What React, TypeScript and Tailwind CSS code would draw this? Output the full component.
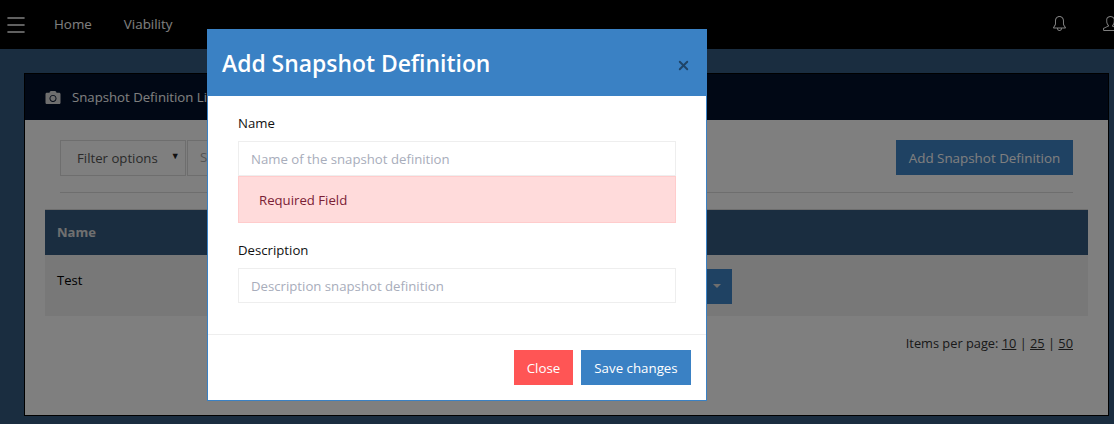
import { Menu, X } from 'lucide-react'
import { FaCamera } from 'react-icons/fa'
import { SlBell, SlUser } from 'react-icons/sl'

const font = { fontFamily: '"Open Sans", "Noto Sans", sans-serif' }

function Navbar() {
  return (
    <nav className="flex h-[49px] items-center bg-black text-[13.4px] text-white">
      <Menu className="ml-[4px] h-[24px] w-[24px]" strokeWidth={1.6} />
      <a className="ml-[26px]">Home</a>
      <a className="ml-[32px]">Viability</a>
      <div className="ml-auto flex items-center gap-[35px]">
        <SlBell className="mb-[3px] mr-[1px] h-[15px] w-[15px]" />
        <SlUser className="mb-[3px] mr-[-4px] h-[15px] w-[15px]" />
      </div>
    </nav>
  )
}

function DefinitionList() {
  return (
    <section className="ml-[24px] mr-[5px] mt-[24px] h-[343px] border border-black bg-white">
      <header className="flex h-[46px] items-center bg-[#02102a] pl-[20px] pt-[1px] text-[13.2px] text-white">
        <FaCamera className="mr-[11px] h-[15px] w-[16px] text-[#ddd]" />
        Snapshot Definition List
      </header>
      <div className="px-[20px]">
        <div className="mx-[15px] flex h-[73px] items-start justify-between border-b border-[#ddd] pt-[20px] text-[13.2px]">
          <div className="flex">
            <div className="flex h-[36px] w-[126px] items-center border border-[#ddd] pl-[16px] pt-[2px] text-[#555]">
              Filter options
              <span className="mb-[6px] ml-[13px] text-[9px] text-[#222]">▼</span>
            </div>
            <div className="ml-px flex h-[36px] w-[200px] items-center border border-[#ddd] pl-[12px] text-[#aaa]">
              Search
            </div>
          </div>
          <button className="h-[35px] w-[177px] bg-[#3e84c6] pt-[1px] text-[13.4px] text-white">
            Add Snapshot Definition
          </button>
        </div>
        <table className="mt-[16px] w-full border-collapse border-t border-[#ddd] text-left text-[13px]">
          <thead>
            <tr className="h-[45px] bg-[#345a80] text-[#e0e0e0]">
              <th className="pl-[12px] pt-[1px] font-bold">Name</th>
              <th />
            </tr>
          </thead>
          <tbody>
            <tr className="h-[61px] bg-[#f0f0f0] text-black">
              <td className="pb-[9px] pl-[12px] align-middle">Test</td>
              <td className="w-[406px] align-top">
                <button className="mt-[14px] flex h-[35px] w-[50px] items-center justify-end bg-[#3e84c6] pr-[11px]">
                  <span className="h-0 w-0 border-x-[4px] border-t-[4px] border-x-transparent border-t-[#ddd]" />
                </button>
              </td>
            </tr>
          </tbody>
        </table>
        <p className="mt-[18px] pr-[15px] text-right text-[12.8px] text-[#333]">
          Items per page: <u>10</u> | <u>25</u> | <u>50</u>
        </p>
      </div>
    </section>
  )
}

function Field({ label, placeholder }: { label: string; placeholder: string }) {
  return (
    <>
      <label className="block text-[13.2px] leading-[18px] text-[#111]">{label}</label>
      <input
        readOnly
        placeholder={placeholder}
        className="mt-[9px] block h-[35px] w-full border border-[#eee] px-[12px] text-[13.2px] outline-none placeholder:text-[#a8adbb]"
      />
    </>
  )
}

function SnapshotModal() {
  return (
    <div className="absolute left-[207px] top-[29px] h-[372px] w-[500px] border border-[#3a81c4] bg-white">
      <div className="flex h-[66px] items-center justify-between bg-[#3a81c4] pl-[14px] pr-[15px]">
        <h2 className="pt-[3px] text-[22.9px] font-semibold text-white">Add Snapshot Definition</h2>
        <X className="mt-[4px] h-[15px] w-[15px] text-[#1f4468]" strokeWidth={3} />
      </div>
      <div className="h-[239px] border-b border-[#eee] px-[30px] pt-[18px]">
        <Field label="Name" placeholder="Name of the snapshot definition" />
        <div className="flex h-[47px] items-center border border-[#ffcccc] bg-[#ffdbdb] pl-[20px] pt-[2px] text-[13.2px] text-[#7a2035]">
          Required Field
        </div>
        <div className="mt-[18px]">
          <Field label="Description" placeholder="Description snapshot definition" />
        </div>
      </div>
      <div className="flex justify-end gap-[8px] pr-[15px] pt-[15px] text-[13.3px] text-white">
        <button className="h-[35px] w-[59px] bg-[#ff5555] pt-[2px]">Close</button>
        <button className="h-[35px] w-[110px] bg-[#3a81c4] pt-[2px]">Save changes</button>
      </div>
    </div>
  )
}

export default function App() {
  return (
    <div style={font} className="relative h-[424px] w-[1114px] overflow-hidden bg-[#345a80]">
      <Navbar />
      <DefinitionList />
      <div className="absolute inset-0 bg-black/50" />
      <SnapshotModal />
    </div>
  )
}
